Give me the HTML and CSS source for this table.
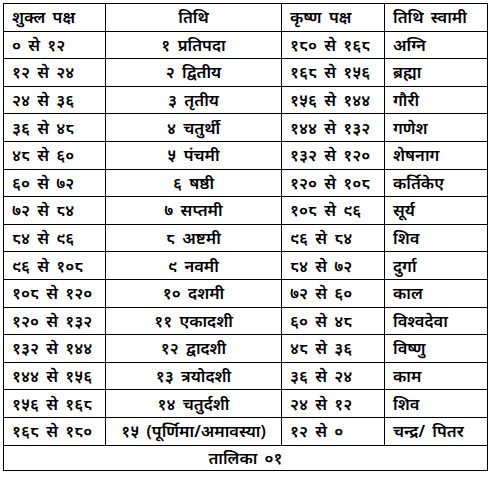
FILE: index.html
```html
<!DOCTYPE html>
<html lang="ne">
<head>
<meta charset="utf-8">
<title>तालिका ०१</title>
<link rel="stylesheet" href="styles.css">
</head>
<body>
<table class="tithi">
<colgroup>
<col class="c1"><col class="c2"><col class="c3"><col class="c4">
</colgroup>
<tbody>
<tr class="row"><td>शुक्ल पक्ष</td><td class="mid">तिथि</td><td>कृष्ण पक्ष</td><td>तिथि स्वामी</td></tr>
<tr class="row"><td>० से १२</td><td class="mid">१ प्रतिपदा</td><td>१८० से १६८</td><td>अग्नि</td></tr>
<tr class="row"><td>१२ से २४</td><td class="mid">२ द्वितीय</td><td>१६८ से १५६</td><td>ब्रह्मा</td></tr>
<tr class="row"><td>२४ से ३६</td><td class="mid">३ तृतीय</td><td>१५६ से १४४</td><td>गौरी</td></tr>
<tr class="row"><td>३६ से ४८</td><td class="mid">४ चतुर्थी</td><td>१४४ से १३२</td><td>गणेश</td></tr>
<tr class="row"><td>४८ से ६०</td><td class="mid">५ पंचमी</td><td>१३२ से १२०</td><td>शेषनाग</td></tr>
<tr class="row"><td>६० से ७२</td><td class="mid">६ षष्ठी</td><td>१२० से १०८</td><td>कर्तिकेए</td></tr>
<tr class="row"><td>७२ से ८४</td><td class="mid">७ सप्तमी</td><td>१०८ से ९६</td><td>सूर्य</td></tr>
<tr class="row"><td>८४ से ९६</td><td class="mid">८ अष्टमी</td><td>९६ से ८४</td><td>शिव</td></tr>
<tr class="row"><td>९६ से १०८</td><td class="mid">९ नवमी</td><td>८४ से ७२</td><td>दुर्गा</td></tr>
<tr class="row"><td>१०८ से १२०</td><td class="mid">१० दशमी</td><td>७२ से ६०</td><td>काल</td></tr>
<tr class="row"><td>१२० से १३२</td><td class="mid">११ एकादशी</td><td>६० से ४८</td><td>विश्वदेवा</td></tr>
<tr class="row"><td>१३२ से १४४</td><td class="mid">१२ द्वादशी</td><td>४८ से ३६</td><td>विष्णु</td></tr>
<tr class="row"><td>१४४ से १५६</td><td class="mid">१३ त्रयोदशी</td><td>३६ से २४</td><td>काम</td></tr>
<tr class="row"><td>१५६ से १६८</td><td class="mid">१४ चतुर्दशी</td><td>२४ से १२</td><td>शिव</td></tr>
<tr class="row"><td>१६८ से १८०</td><td class="mid">१५ (पूर्णिमा/अमावस्या)</td><td>१२ से ०</td><td>चन्द्र/ पितर</td></tr>
<tr class="cap"><td class="mid" colspan="4">तालिका ०१</td></tr>
</tbody>
</table>
</body>
</html>
```
FILE: styles.css
```css
html, body {
  margin: 0;
  padding: 0;
  background: #fff;
}
body {
  padding: 3px 0 0 3px;
  font-family: "Noto Sans", "Lohit Devanagari", "DejaVu Sans", sans-serif;
  color: #000;
}
.tithi {
  border-collapse: collapse;
  table-layout: fixed;
  width: 484px;
  font-size: 16.5px;
  font-weight: 600;
}
.c1 { width: 102px; }
.c2 { width: 176px; }
.c3 { width: 103px; }
.c4 { width: 103px; }
.tithi td {
  border: 1px solid #000;
  padding: 0 0 0 8px;
  height: 26.6px;
  line-height: 20px;
  white-space: nowrap;
  word-spacing: 3px;
  text-align: left;
  vertical-align: middle;
}
.tithi td.mid {
  text-align: center;
  padding-left: 0;
}
.cap td {
  height: 24px;
}
```
